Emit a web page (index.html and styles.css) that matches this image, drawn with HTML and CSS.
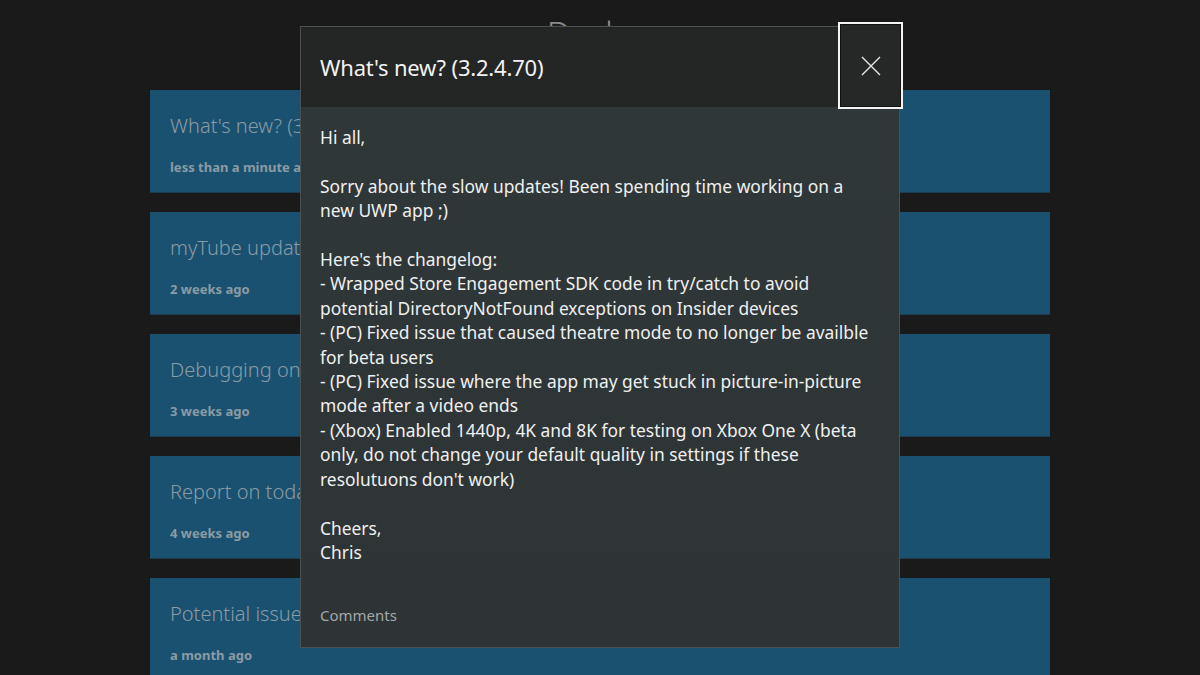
FILE: index.html
```html
<!DOCTYPE html>
<html lang="en">
<head>
<meta charset="utf-8">
<title>Devlog</title>
<link rel="stylesheet" href="styles.css">
</head>
<body>
<div class="page">
  <h1 class="page-title">Devlog</h1>
  <ul class="posts">
    <li class="post"><div class="post-title">What's new? (3.2.4.70)</div><div class="post-time">less than a minute ago</div></li>
    <li class="post"><div class="post-title">myTube update schedule</div><div class="post-time">2 weeks ago</div></li>
    <li class="post"><div class="post-title">Debugging on Xbox One</div><div class="post-time">3 weeks ago</div></li>
    <li class="post"><div class="post-title">Report on today's outage</div><div class="post-time">4 weeks ago</div></li>
    <li class="post"><div class="post-title">Potential issues with playback</div><div class="post-time">a month ago</div></li>
  </ul>
</div>

<div class="dialog">
  <div class="dialog-header">
    <h2 class="dialog-title">What's new? (3.2.4.70)</h2>
  </div>
  <div class="dialog-body">
    <p class="message">Hi all,<br><br>Sorry about the slow updates! Been spending time working on a<br>new UWP app ;)<br><br>Here's the changelog:<br>- Wrapped Store Engagement SDK code in try/catch to avoid<br>potential DirectoryNotFound exceptions on Insider devices<br>- (PC) Fixed issue that caused theatre mode to no longer be availble<br>for beta users<br>- (PC) Fixed issue where the app may get stuck in picture-in-picture<br>mode after a video ends<br>- (Xbox) Enabled 1440p, 4K and 8K for testing on Xbox One X (beta<br>only, do not change your default quality in settings if these<br>resolutuons don't work)<br><br>Cheers,<br>Chris</p>
    <div class="comments">Comments</div>
  </div>
  <button class="close" aria-label="Close">
    <svg width="20" height="20" viewBox="0 0 20 20"><path d="M1 1 L19 19 M19 1 L1 19" stroke="#e8e8e8" stroke-width="1.4" fill="none"/></svg>
  </button>
</div>
</body>
</html>
```

FILE: styles.css
```css
html, body {
  margin: 0;
  padding: 0;
  background: #1a1a1a;
  font-family: "Noto Sans", "Open Sans", sans-serif;
  width: 1200px;
  height: 675px;
  overflow: hidden;
}

.page {
  width: 900px;
  margin: 0 auto;
  padding-top: 14px;
}

.page-title {
  margin: 0 0 20px 0;
  height: 56px;
  font-size: 34px;
  font-weight: 300;
  color: #8a8a8a;
  text-align: center;
  line-height: 40px;
}

.posts {
  list-style: none;
  margin: 0;
  padding: 0;
  display: flex;
  flex-direction: column;
  gap: 20px;
}

.post {
  height: 102px;
  background: #1a5170;
  padding: 21px 20px 0 20px;
  box-sizing: border-box;
  box-shadow: 0 1px 0 #1c3d50;
}

.post-title {
  font-size: 20px;
  font-weight: 300;
  color: #8a9ba5;
  line-height: 30px;
  white-space: nowrap;
}

.post-time {
  margin-top: 18px;
  font-size: 13px;
  font-weight: 700;
  color: #8a9ba5;
  line-height: 16px;
}

.dialog {
  position: absolute;
  left: 300px;
  top: 26px;
  width: 600px;
  height: 622px;
  box-sizing: border-box;
  border: 1px solid #4c5052;
  display: flex;
  flex-direction: column;
  background: #2f3638;
}

.dialog-header {
  height: 80px;
  flex: none;
  background: #242525;
  display: flex;
  align-items: center;
  padding-left: 19px;
}

.dialog-title {
  margin: 0;
  font-size: 22px;
  font-weight: 400;
  color: #f2f2f2;
  letter-spacing: -0.2px;
}

.dialog-body {
  flex: 1;
  padding: 18px 19px 0 19px;
  display: flex;
  flex-direction: column;
  background: linear-gradient(180deg, #2f3739 0%, #2e3436 100%);
}

.message {
  margin: 0;
  font-size: 17.4px;
  line-height: 24.4px;
  color: #f0f0f0;
  white-space: nowrap;
}

.comments {
  margin-top: 41px;
  font-size: 15px;
  color: #a4a8a9;
}

.close {
  position: absolute;
  left: 537px;
  top: -5px;
  width: 65px;
  height: 87px;
  box-sizing: border-box;
  border: 2px solid #f4f4f4;
  box-shadow: inset 0 0 0 1px #111;
  background: #262727;
  padding: 0;
  display: flex;
  align-items: center;
  justify-content: center;
  cursor: pointer;
}
```
